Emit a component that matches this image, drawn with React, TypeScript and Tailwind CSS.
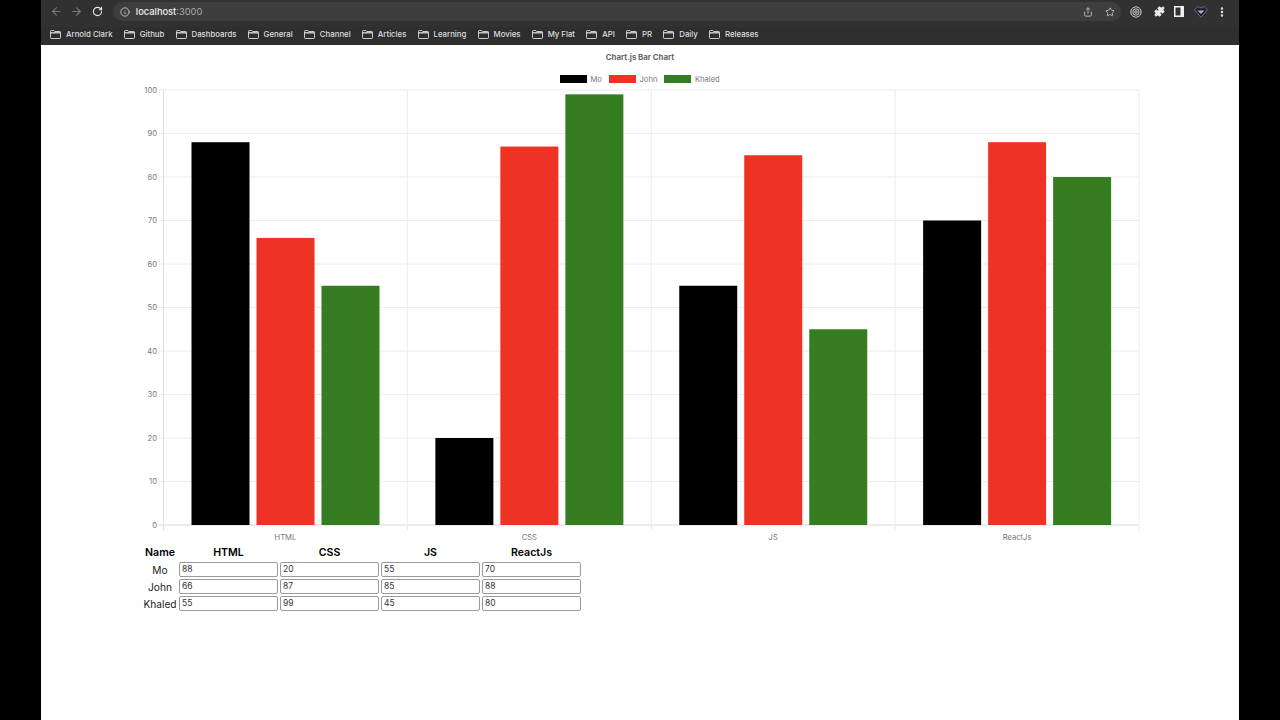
import { ArrowLeft, ArrowRight, EllipsisVertical, Info, Puzzle, RotateCw, Share, Star } from 'lucide-react'

const bookmarks = ['Arnold Clark', 'Github', 'Dashboards', 'General', 'Channel', 'Articles', 'Learning', 'Movies', 'My Flat', 'API', 'PR', 'Daily', 'Releases']
const labels = ['HTML', 'CSS', 'JS', 'ReactJs']

const people = [
  { name: 'Mo', color: '#000000', values: [88, 20, 55, 70] },
  { name: 'John', color: '#ee3224', values: [66, 87, 85, 88] },
  { name: 'Khaled', color: '#367d22', values: [55, 99, 45, 80] },
]

const FolderIcon = () => (
  <svg width="11" height="9" viewBox="0 0 11 9" fill="none" stroke="#dcdcdc" strokeWidth=".9">
    <path d="M.5 7.700V1.200C.5.800.8.500 1.200.500h2.600l.9 1h5.100c.4 0 .7.300.7.700v5.500c0 .4-.3.800-.7.800H1.200c-.4 0-.7-.4-.7-.8z" />
    <path d="M.5 2.800h10" strokeWidth="1.300" />
  </svg>
)

const Chart = () => {
  // chart.js style plot area, coordinates are relative to the svg
  const left = 23.5
  const right = 999
  const top = 45
  const bottom = 480
  const catWidth = (right - left) / 4
  const yFor = (v: number) => bottom - ((bottom - top) * v) / 100

  return (
    <svg width="1000" height="500" viewBox="0 0 1000 500" className="block" fontFamily="Inter, sans-serif">
      <text x="500" y="15" textAnchor="middle" fontSize="7.8" fontWeight="700" fill="#666">Chart.js Bar Chart</text>

      <rect x="420" y="30" width="27" height="8" fill="#000" />
      <text x="450.500" y="36.800" fontSize="7.6" fill="#777">Mo</text>
      <rect x="469" y="30" width="27" height="8" fill="#ee3224" />
      <text x="499.500" y="36.800" fontSize="7.6" fill="#777">John</text>
      <rect x="524" y="30" width="27" height="8" fill="#367d22" />
      <text x="555" y="36.800" fontSize="7.6" fill="#777">Khaled</text>

      {Array.from({ length: 11 }, (_, i) => (
        <g key={i}>
          <line x1={left - 5} x2={right} y1={yFor(i * 10)} y2={yFor(i * 10)} stroke={i === 0 ? '#d9d9d9' : '#ececec'} strokeWidth="1" />
          <text x={left - 6.500} y={yFor(i * 10) + 2.700} textAnchor="end" fontSize="7.6" fill="#777">{i * 10}</text>
        </g>
      ))}
      {Array.from({ length: 5 }, (_, i) => (
        <line key={i} x1={left + catWidth * i} x2={left + catWidth * i} y1={top} y2={bottom + 5} stroke={i === 0 ? '#dedede' : '#ececec'} strokeWidth="1" />
      ))}

      {labels.map((label, c) => (
        <g key={label}>
          {people.map((p, s) => (
            <rect
              key={p.name}
              x={left + catWidth * c + 28 + s * 65}
              y={yFor(p.values[c])}
              width="58"
              height={bottom - yFor(p.values[c])}
              fill={p.color}
            />
          ))}
          <text x={left + catWidth * (c + 0.5)} y={494.500} textAnchor="middle" fontSize="7.6" fill="#777">{label}</text>
        </g>
      ))}
    </svg>
  )
}

export default function App() {
  return (
    <div className="flex h-[720px] w-[1280px] overflow-hidden bg-black font-['Inter',sans-serif]">
      <div className="flex w-[1198px] ml-[41px] flex-col bg-white">
        {/* browser toolbar */}
        <div className="flex h-[27px] items-center bg-[#313131] pb-[4px] pl-[9px] pr-[11px] text-[#dedede]">
          <ArrowLeft size={13} className="text-[#77797c]" />
          <ArrowRight size={13} className="ml-[7px] text-[#77797c]" />
          <RotateCw size={11} strokeWidth={2.4} className="ml-[9px] text-[#e8e8e8]" />
          <div className="ml-[10px] flex h-[19px] w-[1012px] items-center rounded-full bg-[#3e3e3e] pl-[7px] pr-[5px]">
            <Info size={10} className="text-[#d0d0d0]" />
            <span className="ml-[6px] text-[9.3px] font-medium text-[#eeeeee]">localhost<span className="font-normal text-[#a8a8a8]">:3000</span></span>
            <Share size={10} className="ml-auto text-[#c8c8c8]" />
            <Star size={10} className="ml-[12px] mr-[1px] text-[#c8c8c8]" />
          </div>
          <svg width="12" height="12" viewBox="0 0 12 12" fill="none" stroke="#d0d0d0" className="ml-[9px]">
            <circle cx="6" cy="6" r="5.200" />
            <circle cx="6" cy="6" r="3.200" />
            <circle cx="6" cy="6" r="1.300" />
          </svg>
          <Puzzle size={11} className="ml-[12px] fill-[#eeeeee] text-[#eeeeee]" />
          <svg width="10" height="11" viewBox="0 0 10 11" className="ml-[9px]">
            <path d="M0 0h10v11H0z" fill="#f2f2f2" />
            <path d="M1.500 1.500h5v8h-5z" fill="#313131" />
          </svg>
          <svg width="14" height="12" viewBox="0 0 14 12" className="ml-[10px]">
            <path d="M3.500.8c1.300 0 2.600.4 3.500 1.200.9-.8 2.200-1.200 3.500-1.200l3 3L7 11.400.5 3.800z" fill="#1b2233" stroke="#8a93a8" strokeWidth=".7" />
            <path d="M3.500 4.500h7L7 8z" fill="#aab2c6" />
          </svg>
          <EllipsisVertical size={12} strokeWidth={3} className="ml-[8px] text-[#e4e4e4]" />
        </div>

        {/* bookmarks */}
        <div className="flex h-[18px] items-center gap-[11.2px] bg-[#2e2e2e] pb-[3px] pl-[9px]">
          {bookmarks.map((b) => (
            <div key={b} className="flex items-center gap-[5px]">
              <FolderIcon />
              <span className="text-[7.8px] font-medium leading-none text-[#dedede]">{b}</span>
            </div>
          ))}
        </div>

        <div className="pl-[99px]">
          <Chart />
          <table className="mt-[1px] ml-[1px] border-separate border-spacing-x-[2px] border-spacing-y-[1px] text-[10.6px] leading-none text-black">
            <thead>
              <tr className="h-[13px]">
                <th className="min-w-[34px] font-semibold whitespace-nowrap">Name</th>
                {labels.map((l) => (
                  <th key={l} className="w-[99px] font-semibold">{l}</th>
                ))}
              </tr>
            </thead>
            <tbody>
              {people.map((p) => (
                <tr key={p.name} className="h-[16px]">
                  <td className="pt-[2px] text-center text-[10.2px] font-normal text-[#222222] whitespace-nowrap">{p.name}</td>
                  {p.values.map((v, i) => (
                    <td key={i} className="p-0">
                      <input
                        readOnly
                        value={v}
                        className="block h-[15px] w-[99px] rounded-[2px] border border-[#9a9a9a] px-[2px] text-[8.5px] text-[#333333]"
                      />
                    </td>
                  ))}
                </tr>
              ))}
            </tbody>
          </table>
        </div>
      </div>
    </div>
  )
}
